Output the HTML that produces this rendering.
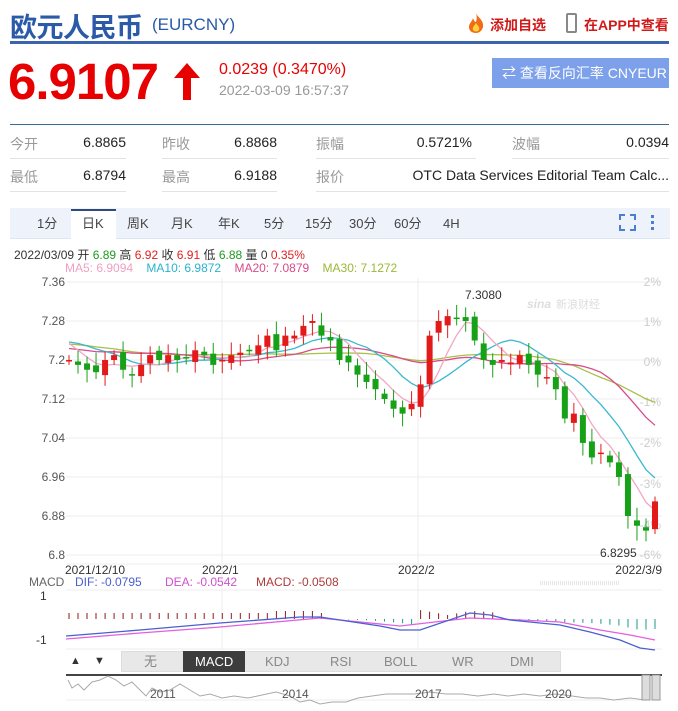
<!DOCTYPE html>
<html><head><meta charset="utf-8">
<style>
*{margin:0;padding:0;box-sizing:border-box}
body{width:678px;height:711px;background:#fff;font-family:"Liberation Sans","Noto Sans CJK SC",sans-serif;position:relative;overflow:hidden;color:#333}
.a{position:absolute;white-space:nowrap}
.lbl{color:#999;font-size:14px}
.val{font-size:14px;color:#222;text-align:right}
.ul{position:absolute;height:1px;background:#e3e3e3}
.tab{position:absolute;top:215px;font-size:13px;color:#444;line-height:18px;height:18px}
</style></head><body>
<div class="a" style="left:10px;top:6px;font-size:27px;font-weight:bold;color:#2a5aa8;letter-spacing:-0.5px">欧元人民币</div>
<div class="a" style="left:152px;top:15px;font-size:17px;color:#2a5aa8">(EURCNY)</div>
<svg class="a" style="left:466px;top:12px" width="20" height="22" viewBox="0 0 20 22"><path d="M10 1C12 6 18 8 17 15C16 19 13 21 10 21C6 21 3 19 3 15C3 11 6 10 7 6C8 9 9 10 10 10C11 7 11 4 10 1Z" fill="#f26b16"/><path d="M10 11C12 14 14 15 13 18C12 20 8 20 7 18C6 16 8 14 10 11Z" fill="#ffd23c"/></svg>
<div class="a" style="left:490px;top:15px;font-size:14px;font-weight:bold;color:#d01a1a">添加自选</div>
<div class="a" style="left:566px;top:13px;width:11px;height:20px;border:2px solid #888;border-radius:2px"></div>
<div class="a" style="left:584px;top:15px;font-size:14px;font-weight:bold;color:#d01a1a">在APP中查看</div>
<div class="a" style="left:10px;top:41px;width:659px;height:3px;background:#3c63ad"></div>

<div class="a" style="left:8px;top:52px;font-size:51px;font-weight:bold;color:#e60000;letter-spacing:-1px">6.9107</div>
<svg class="a" style="left:172px;top:62px" width="30" height="40" viewBox="0 0 30 40"><path d="M15 1L28 16H19V38H11V16H2Z" fill="#e60000"/></svg>
<div class="a" style="left:219px;top:61px;font-size:16px;color:#e60000">0.0239 (0.3470%)</div>
<div class="a" style="left:219px;top:82px;font-size:14px;color:#999">2022-03-09 16:57:37</div>
<div class="a" style="left:492px;top:58px;width:177px;height:30px;background:#7ca0ea;color:#fff;font-size:14px;line-height:30px;padding-left:10px">⇄ 查看反向汇率 CNYEUR</div>

<div class="a" style="left:10px;top:124px;width:659px;height:1px;background:#3b6c8f"></div>
<div class="a lbl" style="left:10px;top:134px">今开</div><div class="a val" style="left:60px;top:134px;width:66px">6.8865</div>
<div class="a lbl" style="left:162px;top:134px">昨收</div><div class="a val" style="left:210px;top:134px;width:67px">6.8868</div>
<div class="a lbl" style="left:316px;top:134px">振幅</div><div class="a val" style="left:380px;top:134px;width:92px">0.5721%</div>
<div class="a lbl" style="left:512px;top:134px">波幅</div><div class="a val" style="left:580px;top:134px;width:89px">0.0394</div>
<div class="ul" style="left:10px;top:158px;width:116px"></div><div class="ul" style="left:162px;top:158px;width:115px"></div><div class="ul" style="left:316px;top:158px;width:160px"></div><div class="ul" style="left:512px;top:158px;width:157px"></div>
<div class="a lbl" style="left:10px;top:167px">最低</div><div class="a val" style="left:60px;top:167px;width:66px">6.8794</div>
<div class="a lbl" style="left:162px;top:167px">最高</div><div class="a val" style="left:210px;top:167px;width:67px">6.9188</div>
<div class="a lbl" style="left:316px;top:167px">报价</div><div class="a val" style="left:400px;top:167px;width:269px">OTC Data Services Editorial Team Calc...</div>
<div class="ul" style="left:10px;top:191px;width:116px"></div><div class="ul" style="left:162px;top:191px;width:115px"></div><div class="ul" style="left:316px;top:191px;width:353px"></div>

<div class="a" style="left:10px;top:208px;width:660px;height:31px;background:#eef3fb;border-bottom:1px solid #dde6f3"></div>
<div class="a" style="left:71px;top:209px;width:45px;height:30px;background:#fff;border-top:2px solid #2c4a7c"></div>
<div class="tab" style="left:37px">1分</div><div class="tab" style="left:82px">日K</div><div class="tab" style="left:127px">周K</div><div class="tab" style="left:171px">月K</div><div class="tab" style="left:218px">年K</div><div class="tab" style="left:264px">5分</div><div class="tab" style="left:305px">15分</div><div class="tab" style="left:349px">30分</div><div class="tab" style="left:394px">60分</div><div class="tab" style="left:443px">4H</div>
<svg class="a" style="left:619px;top:214px" width="40" height="18"><g stroke="#4a7fd0" stroke-width="2" fill="none"><path d="M1 6V1H6M11 1H16V6M16 11V16H11M6 16H1V11"/></g><g fill="#4a7fd0"><rect x="32" y="1" width="3" height="3"/><rect x="32" y="7" width="3" height="3"/><rect x="32" y="13" width="3" height="3"/></g></svg>

<div class="a" style="left:14px;top:246px;font-size:12px;color:#333">2022/03/09 开 <span style="color:#1e9a1e">6.89</span> 高 <span style="color:#e02020">6.92</span> 收 <span style="color:#e02020">6.91</span> 低 <span style="color:#1e9a1e">6.88</span> 量 0 <span style="color:#e02020">0.35%</span></div>
<div class="a" style="left:65px;top:261px;font-size:12px"><span style="color:#f0a0c0">MA5: 6.9094</span>&nbsp;&nbsp;&nbsp;&nbsp;<span style="color:#2ab3d0">MA10: 6.9872</span>&nbsp;&nbsp;&nbsp;&nbsp;<span style="color:#d84c8a">MA20: 7.0879</span>&nbsp;&nbsp;&nbsp;&nbsp;<span style="color:#9cb836">MA30: 7.1272</span></div>

<svg class="a" style="left:0;top:270px" width="678" height="441" id="sv" font-family="Liberation Sans, sans-serif"></svg>

<div class="a" style="left:62px;top:651px;width:56px;height:21px;background:#fff"></div>
<div class="a" style="left:70px;top:655px;font-size:11px">▲</div><div class="a" style="left:94px;top:655px;font-size:11px">▼</div>
<div class="a" style="left:121px;top:651px;width:440px;height:21px;background:#e8e8e8;border:1px solid #ddd"></div>
<div class="a" style="left:183px;top:651px;width:62px;height:21px;background:#3d3d3d"></div>
<div class="a" style="left:144px;top:653px;font-size:13px;color:#888;line-height:17px">无</div>
<div class="a" style="left:195px;top:654px;font-size:13px;color:#fff">MACD</div>
<div class="a" style="left:265px;top:654px;font-size:13px;color:#888">KDJ</div>
<div class="a" style="left:330px;top:654px;font-size:13px;color:#888">RSI</div>
<div class="a" style="left:384px;top:654px;font-size:13px;color:#888">BOLL</div>
<div class="a" style="left:452px;top:654px;font-size:13px;color:#888">WR</div>
<div class="a" style="left:510px;top:654px;font-size:13px;color:#888">DMI</div>

<script>
(function(){
var sv=document.getElementById('sv'),h='';
function Y(p){return 282+(7.36-p)*487.5-270;}
[7.36,7.28,7.2,7.12,7.04,6.96,6.88,6.8].forEach(function(p,i){var y=Y(p);h+='<line x1="66" x2="662" y1="'+y+'" y2="'+y+'" stroke="#eee"/>';h+='<text x="65" y="'+(y+4)+'" font-size="12" fill="#555" text-anchor="end">'+p+'</text>';});
['2%','1%','0%','-1%','-2%','-3%','-4%','-6%'].forEach(function(t,i){var y=[282,322,362,402,443,484,525,555][i]-270+4;h+='<text x="661" y="'+y+'" font-size="12" fill="#ccc" text-anchor="end">'+t+'</text>';});
h+='<line x1="222" x2="222" y1="8" y2="380" stroke="#eee"/><line x1="418" x2="418" y1="8" y2="380" stroke="#eee"/>';
var c=[7.20,7.19,7.18,7.175,7.20,7.21,7.18,7.17,7.19,7.21,7.20,7.21,7.20,7.205,7.22,7.21,7.19,7.20,7.21,7.215,7.22,7.23,7.25,7.22,7.25,7.25,7.27,7.28,7.25,7.24,7.20,7.195,7.17,7.155,7.14,7.12,7.10,7.09,7.11,7.15,7.25,7.28,7.29,7.285,7.28,7.24,7.20,7.19,7.20,7.195,7.21,7.19,7.17,7.165,7.14,7.08,7.09,7.03,7.00,7.01,6.99,6.96,6.88,6.86,6.85,6.91];
var n=c.length,x0=69,dx=(655-69)/(n-1);
var pre=[7.22,7.23,7.24,7.25,7.26,7.27,7.27,7.26,7.25,7.24,7.24,7.23,7.22,7.22,7.21,7.21,7.2,7.2,7.2,7.2,7.21,7.22,7.23,7.24,7.25,7.26,7.26,7.25,7.24,7.22];
var all=pre.concat(c);
function ma(k,col){var d='';for(var i=0;i<n;i++){var j=i+pre.length,s=0;for(var q=0;q<k;q++)s+=all[j-q];d+=(i?'L':'M')+(x0+i*dx).toFixed(1)+' '+Y(s/k).toFixed(1);}h+='<path d="'+d+'" fill="none" stroke="'+col+'" stroke-width="1.3"/>';}
ma(30,'#a6c04a');ma(20,'#d84c8a');ma(10,'#3ab8d0');ma(5,'#f4a6c4');
for(var i=0;i<n;i++){var o=i?c[i-1]+((i*37%7)-3)*0.003:7.2,cl=c[i],x=x0+i*dx;var up=cl>=o,col=up?'#e31a1a':'#17a117';var hi=Math.max(o,cl)+0.01+(i*13%5)*0.004,lo=Math.min(o,cl)-0.01-(i*7%5)*0.004;if(i==44)hi=7.308;if(i==63)lo=6.8295;
h+='<line x1="'+x+'" x2="'+x+'" y1="'+Y(hi)+'" y2="'+Y(lo)+'" stroke="'+col+'"/>';var t=Y(Math.max(o,cl)),b=Y(Math.min(o,cl));h+='<rect x="'+(x-3)+'" y="'+t+'" width="6" height="'+Math.max(b-t,1.5)+'" fill="'+col+'"/>';}
h+='<text x="465" y="29" font-size="12" fill="#333">7.3080</text><text x="600" y="287" font-size="12" fill="#333">6.8295</text>';
h+='<text x="527" y="38" font-size="12" fill="#ddd" font-style="italic" font-weight="bold">sina</text><text x="556" y="38" font-size="11" fill="#ddd">新浪财经</text>';
h+='<line x1="66" x2="662" y1="294" y2="294" stroke="#eee"/>';
h+='<text x="65" y="304" font-size="12" fill="#333">2021/12/10</text><text x="202" y="304" font-size="12" fill="#333">2022/1</text><text x="398" y="304" font-size="12" fill="#333">2022/2</text><text x="662" y="304" font-size="12" fill="#333" text-anchor="end">2022/3/9</text>';
h+='<text x="29" y="316" font-size="12" fill="#666">MACD</text><text x="75" y="316" font-size="12" fill="#4a5fd0">DIF: -0.0795</text><text x="165" y="316" font-size="12" fill="#d050d0">DEA: -0.0542</text><text x="256" y="316" font-size="12" fill="#b03a3a">MACD: -0.0508</text>';
h+='<line x1="540" x2="620" y1="313" y2="313" stroke="#e6e6e6" stroke-dasharray="1 1" stroke-width="4"/>';
h+='<line x1="66" x2="662" y1="320" y2="320" stroke="#eee"/><text x="40" y="330" font-size="12" fill="#333">1</text><text x="36" y="374" font-size="12" fill="#333">-1</text><line x1="66" x2="662" y1="379" y2="379" stroke="#eee"/>';
function interp(pts,x){for(var k=1;k<pts.length;k++){if(x<=pts[k][0]){var a=pts[k-1],b=pts[k];return a[1]+(b[1]-a[1])*(x-a[0])/(b[0]-a[0]);}}return pts[pts.length-1][1];}
var DIF=[[66,636],[140,630],[220,623],[300,617],[320,617],[340,620],[380,626],[400,630],[420,630],[470,613],[490,615],[510,620],[560,625],[590,632],[620,640],[640,648],[655,650]];
var DEA=[[66,639],[140,633],[220,627],[320,618],[360,622],[400,626],[470,618],[520,620],[560,622],[600,630],[630,635],[655,640]];
for(var i=0;i<n;i++){var x=x0+i*dx,zy=619-270,tp;if(x<330){tp=zy-6;if(x>270&&x<320)tp=zy-8;}else{var dd=interp(DEA,x)-interp(DIF,x);tp=zy-dd;if(x>420&&x<500)tp=zy-Math.abs(dd)*0.8-4;}
h+='<line x1="'+x.toFixed(1)+'" x2="'+x.toFixed(1)+'" y1="'+zy+'" y2="'+tp.toFixed(1)+'" stroke="'+(tp<zy?'#8b1a1a':'#1a9a8a')+'"/>';}
function pth(p,col){var d='';p.forEach(function(q,k){d+=(k?'L':'M')+q[0]+' '+(q[1]-270);});h+='<path d="'+d+'" fill="none" stroke="'+col+'" stroke-width="1.3"/>';}
pth(DEA,'#e060e0');pth(DIF,'#4a5fd0');
h+='<rect x="66" y="404" width="596" height="2" fill="#444"/><line x1="66" x2="662" y1="430" y2="430" stroke="#eee"/>';
h+='<path d="M68 410L72 418L78 414L84 420L92 412L100 410L108 406L116 410L124 416L132 412L140 420L146 426L152 418L160 422L170 420L180 414L190 420L200 426L210 424L222 428L234 426L248 428L262 425L276 422L290 426L300 432L310 430L320 434L332 432L346 432L358 428L372 426L386 424L400 424L414 424L430 422L446 424L462 424L478 426L494 424L508 426L524 424L540 426L556 424L572 426L586 428L600 428L614 430L630 428L645 430" fill="none" stroke="#aaa"/>';
[['2011',150],['2014',282],['2017',415],['2020',545]].forEach(function(a){h+='<text x="'+a[1]+'" y="428" font-size="12" fill="#555">'+a[0]+'</text>';});
h+='<rect x="642" y="405" width="8" height="25" fill="#ddd" stroke="#999"/><rect x="652" y="405" width="8" height="25" fill="#ddd" stroke="#999"/>';
sv.innerHTML=h;
})();
</script>
</body></html>
